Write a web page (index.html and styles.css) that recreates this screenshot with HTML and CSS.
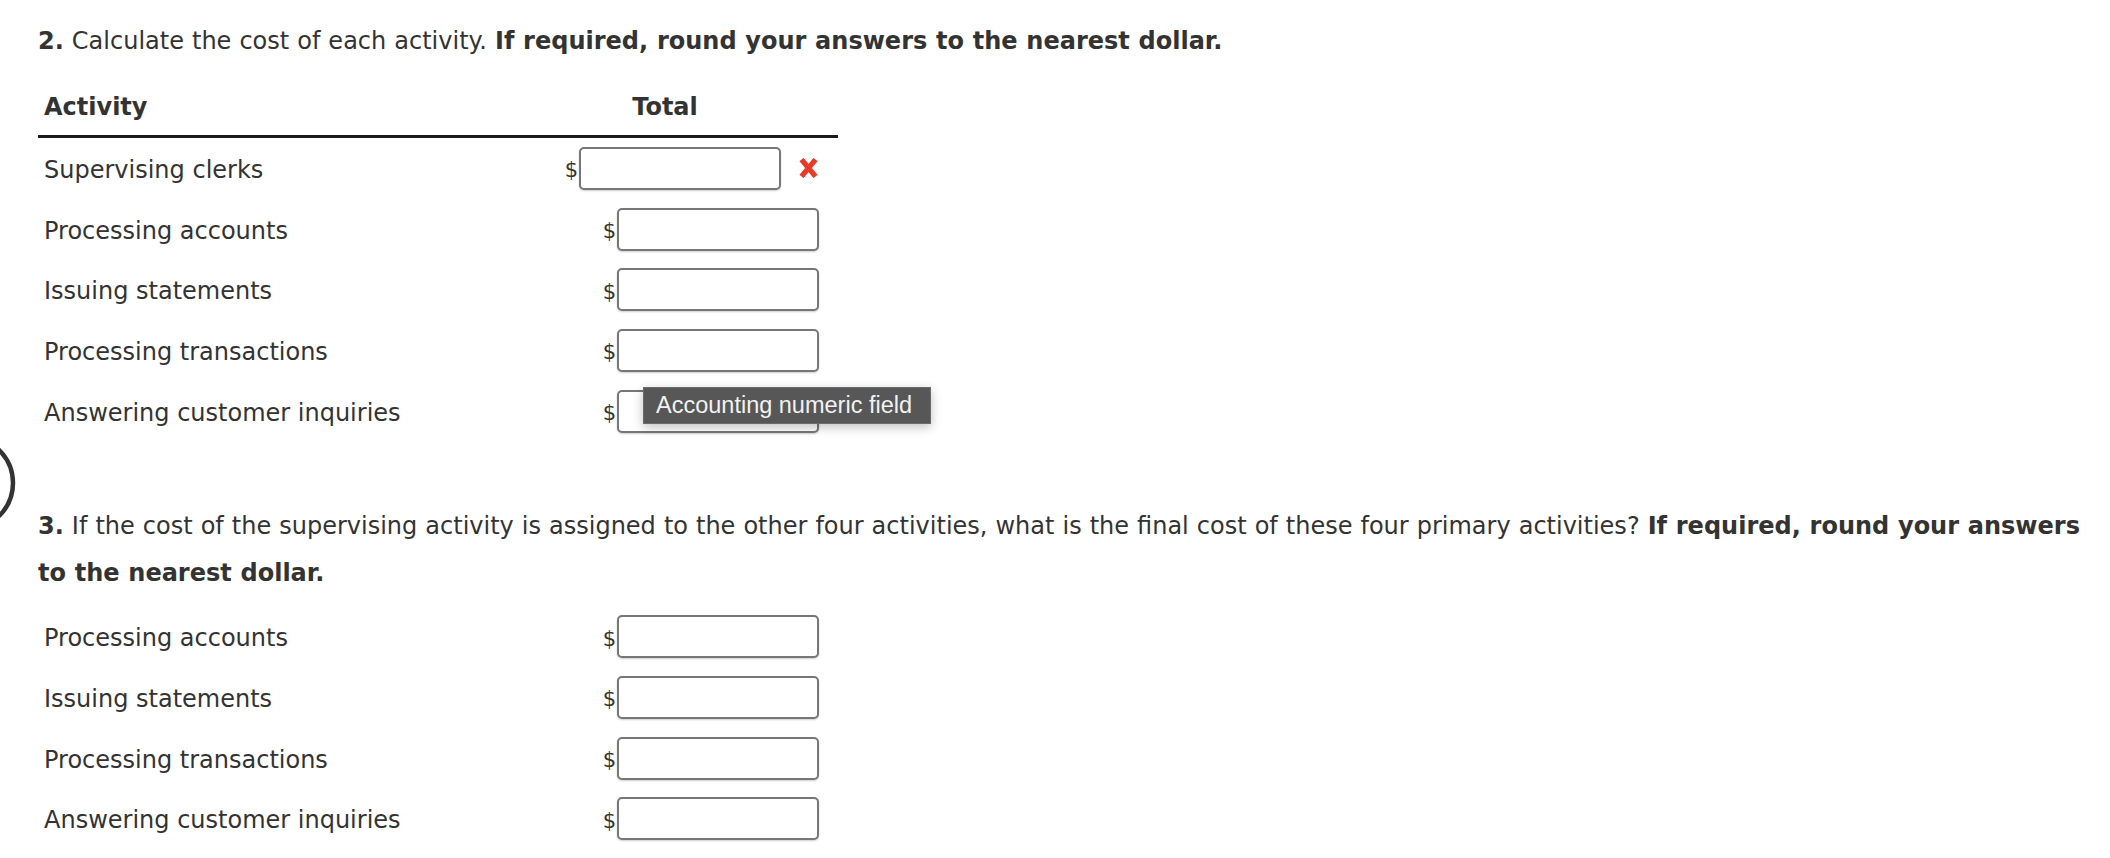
FILE: index.html
```html
<!DOCTYPE html>
<html lang="en">
<head>
<meta charset="utf-8">
<title>Activity costs</title>
<link rel="stylesheet" href="styles.css">
</head>
<body>
<svg class="side-ring" width="20" height="90" viewBox="0 0 20 90" aria-hidden="true">
  <circle cx="-33" cy="43" r="46" fill="none" stroke="#333" stroke-width="4.5"/>
</svg>
<main class="page">
  <p class="question"><b>2.</b> Calculate the cost of each activity. <b>If required, round your answers to the nearest dollar.</b></p>

  <div class="qtable">
    <div class="qrow head">
      <div class="label">Activity</div>
      <div class="amount-head">Total</div>
    </div>
    <div class="qrow">
      <div class="label">Supervising clerks</div>
      <div class="amount"><span class="cur">$</span><span class="field"></span><svg class="wrong" width="19" height="20" viewBox="0 0 19 20" aria-label="incorrect"><path d="M2.5 1.5 L16.5 18.5 M16.5 1.5 L2.5 18.5" stroke="#e63b2a" stroke-width="5.2" stroke-linecap="butt" fill="none"/></svg></div>
    </div>
    <div class="qrow">
      <div class="label">Processing accounts</div>
      <div class="amount"><span class="cur">$</span><span class="field"></span></div>
    </div>
    <div class="qrow">
      <div class="label">Issuing statements</div>
      <div class="amount"><span class="cur">$</span><span class="field"></span></div>
    </div>
    <div class="qrow">
      <div class="label">Processing transactions</div>
      <div class="amount"><span class="cur">$</span><span class="field"></span></div>
    </div>
    <div class="qrow">
      <div class="label">Answering customer inquiries</div>
      <div class="amount"><span class="cur">$</span><span class="field has-tip"><span class="tooltip">Accounting numeric field</span></span></div>
    </div>
  </div>

  <p class="question q3"><b>3.</b> If the cost of the supervising activity is assigned to the other four activities, what is the final cost of these four primary activities? <b>If required, round your answers to the nearest dollar.</b></p>

  <div class="qtable plain">
    <div class="qrow">
      <div class="label">Processing accounts</div>
      <div class="amount"><span class="cur">$</span><span class="field"></span></div>
    </div>
    <div class="qrow">
      <div class="label">Issuing statements</div>
      <div class="amount"><span class="cur">$</span><span class="field"></span></div>
    </div>
    <div class="qrow">
      <div class="label">Processing transactions</div>
      <div class="amount"><span class="cur">$</span><span class="field"></span></div>
    </div>
    <div class="qrow">
      <div class="label">Answering customer inquiries</div>
      <div class="amount"><span class="cur">$</span><span class="field"></span></div>
    </div>
  </div>
</main>
</body>
</html>
```

FILE: styles.css
```css
html, body {
  margin: 0;
  padding: 0;
  background: #fff;
}

body {
  position: relative;
  font-family: "DejaVu Sans", Verdana, sans-serif;
  font-size: 24px;
  color: #333;
  overflow: hidden;
}

.side-ring {
  position: absolute;
  left: 0;
  top: 440px;
}

.page {
  padding: 18px 20px 0 38px;
}

.question {
  margin: 0;
  line-height: 47px;
  word-spacing: 0.4px;
}

.question b {
  font-weight: bold;
}

.q3 {
  margin-top: 62px;
}

.qtable {
  width: 800px;
  margin-top: 19px;
  display: flex;
  flex-direction: column;
}

.qtable.plain {
  margin-top: 9px;
}

.qrow {
  display: grid;
  grid-template-columns: 454px 346px;
  align-items: center;
  height: 60.7px;
}

.qrow.head {
  height: auto;
  line-height: 47px;
  font-weight: bold;
  padding-bottom: 4px;
  border-bottom: 3px solid #1a1a1a;
}

.label {
  padding-left: 6px;
  padding-top: 3px;
}

.qrow.head .label {
  padding-top: 0;
}

.amount-head {
  text-align: center;
}

.amount {
  display: flex;
  justify-content: flex-end;
  align-items: center;
  padding-right: 19px;
}

.cur {
  font-size: 21px;
  margin-top: 4px;
  margin-right: 1px;
}

.field {
  position: relative;
  box-sizing: border-box;
  width: 202px;
  height: 43px;
  border: 2px solid #777;
  border-radius: 5px;
  background: #fff;
  box-shadow: 0 1px 2px rgba(0, 0, 0, 0.2);
}

.wrong {
  display: block;
  margin-left: 18px;
  margin-right: 1px;
}

.tooltip {
  position: absolute;
  left: 24px;
  top: -5px;
  box-sizing: border-box;
  width: 288px;
  height: 37px;
  padding: 0 12px;
  background: #575757;
  border: 1px solid #6b6b6b;
  color: #f2f2f2;
  font-family: "Liberation Sans", Arial, sans-serif;
  font-size: 23.5px;
  line-height: 35px;
  white-space: nowrap;
  box-shadow: 0 3px 10px rgba(0, 0, 0, 0.25);
  z-index: 2;
}
```
